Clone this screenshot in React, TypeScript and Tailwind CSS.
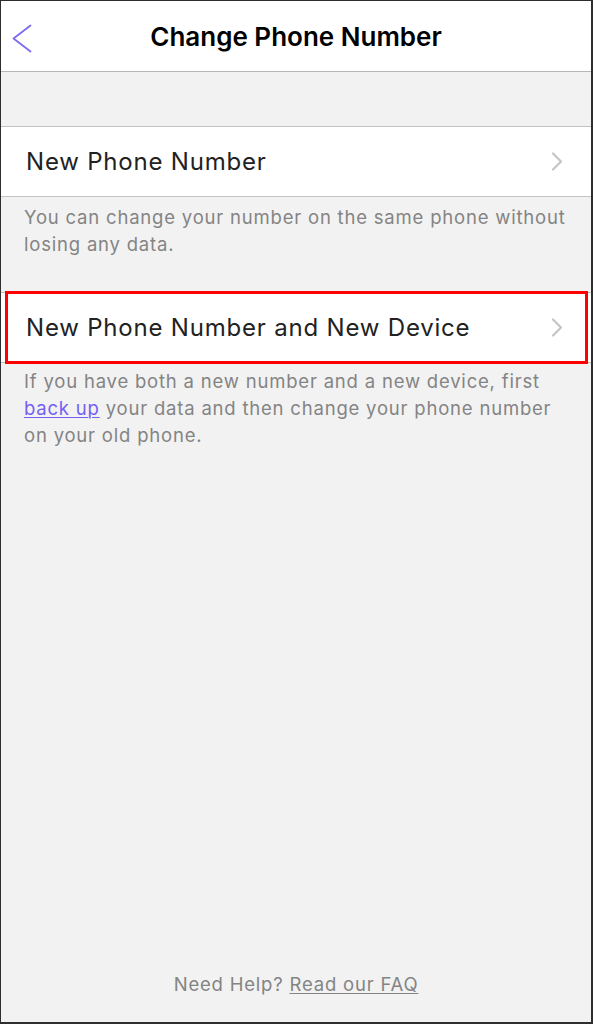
import React from "react";

const font = { fontFamily: '"Inter", "Liberation Sans", Arial, sans-serif' };

function BackChevron() {
  return (
    <svg width="20" height="30" viewBox="0 0 20 30" fill="none" className="block">
      <polyline points="18.5,1.5 1.5,14.5 18.5,27.5" stroke="#7b6cf0" strokeWidth="1.8" strokeLinecap="round" strokeLinejoin="round" />
    </svg>
  );
}

function Chevron() {
  return (
    <svg width="12" height="19" viewBox="0 0 12 19" fill="none" className="block">
      <polyline points="2,1.5 10,9.5 2,17.5" stroke="#c5c5c9" strokeWidth="2.2" strokeLinecap="round" strokeLinejoin="round" />
    </svg>
  );
}

function Row({ label }: { label: string }) {
  return (
    <div className="flex h-[71px] items-center justify-between border-y border-[#c3c3c3] bg-white pl-[25px] pr-[28px]">
      <span className="text-[24px] leading-none tracking-[0.8px] text-[#222222]">{label}</span>
      <Chevron />
    </div>
  );
}

export default function App() {
  return (
    <div
      className="flex h-[1024px] w-full flex-col border-t border-l border-r-2 border-b-2 border-[#2e2e2e] bg-[#f2f2f2]"
      style={font}
    >
      {/* navigation bar */}
      <header className="relative flex h-[71px] shrink-0 items-center justify-center border-b border-[#b7b7b7] bg-white">
        <button className="absolute left-[11px] top-[23px]">
          <BackChevron />
        </button>
        <h1 className="text-[26px] font-semibold tracking-[0px] text-black">Change Phone Number</h1>
      </header>

      <div className="h-[54px] shrink-0" />

      <Row label="New Phone Number" />
      <p className="px-[23px] pt-[7px] text-[18.5px] leading-[27px] tracking-[0.8px] text-[#848484]">
        You can change your number on the same phone without losing any data.
      </p>

      <div className="relative mt-[34px]">
        <Row label="New Phone Number and New Device" />
        {/* highlight frame */}
        <div className="pointer-events-none absolute -top-px -bottom-px left-[4px] right-[3px] border-[3px] border-[#ff0000]" />
      </div>
      <p className="px-[23px] pt-[5px] text-[18.5px] leading-[27px] tracking-[0.8px] text-[#848484]">
        If you have both a new number and a new device, first{" "}
        <a className="text-[#7360f2] underline decoration-1 underline-offset-2">back up</a> your data and then change
        your phone number on your old phone.
      </p>

      <footer className="mt-auto pb-[24px] text-center text-[18.5px] leading-[27px] tracking-[0.8px] text-[#848484]">
        Need Help? <a className="underline decoration-1 underline-offset-2">Read our FAQ</a>
      </footer>
    </div>
  );
}
